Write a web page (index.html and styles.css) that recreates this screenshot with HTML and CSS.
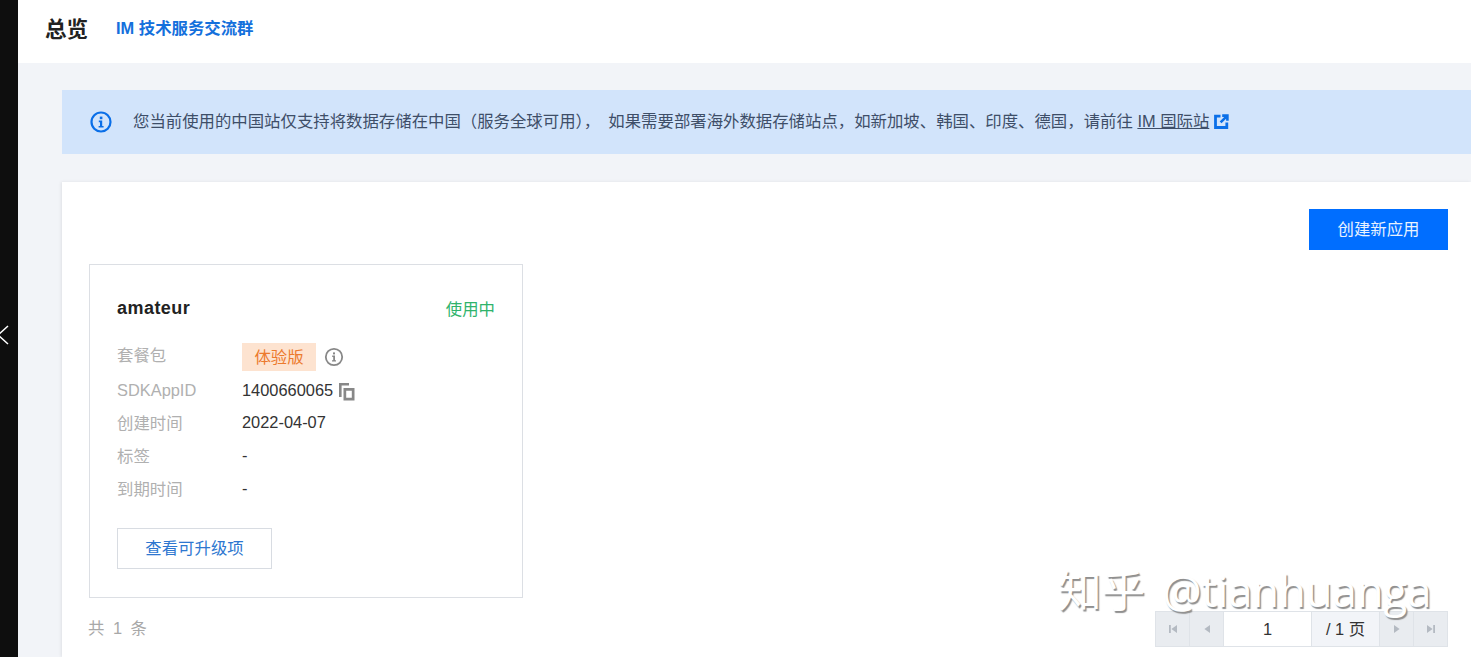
FILE: index.html
```html
<!DOCTYPE html>
<html lang="zh-CN">
<head>
  <meta charset="UTF-8" />
  <title>总览</title>
  <link rel="stylesheet" href="styles.css">
</head>
<body>
  <div class="side">
    <svg class="side-arrow" width="10" height="24" viewBox="0 0 10 24"><path d="M8 3 L-2 12 L8 21" fill="none" stroke="#fff" stroke-width="1.5"/></svg>
  </div>
  <div class="main">
    <div class="header">
      <h2 class="title">总览</h2>
      <a class="group-link">IM 技术服务交流群</a>
    </div>
    <div class="content">
      <div class="notice">
        <svg class="notice-icon" width="24" height="24" viewBox="0 0 24 24">
          <circle cx="12" cy="12" r="9.5" fill="none" stroke="#0a6fe8" stroke-width="2.2"/>
          <rect x="10.8" y="6.6" width="2.6" height="2.6" fill="#0a6fe8"/>
          <path d="M9.8 10.6h3.4v5.4h1.4v1.6H9.6V16h1.4v-3.8H9.8z" fill="#0a6fe8"/>
        </svg>
        <span class="notice-text">您当前使用的中国站仅支持将数据存储在中国（服务全球可用），&ensp;如果需要部署海外数据存储站点，如新加坡、韩国、印度、德国，请前往 <a class="notice-link">IM 国际站</a></span>
        <svg class="ext-icon" width="15" height="15" viewBox="0 0 15 15">
          <path d="M6.5 2.2H1.5v11.3h11.3V8.5" fill="none" stroke="#0a6fe8" stroke-width="2.8"/>
          <path d="M6.6 8.4L12.4 2.6M8.2 1.6h5.2v5.2" fill="none" stroke="#0a6fe8" stroke-width="2.6"/>
        </svg>
      </div>
      <div class="panel">
        <div class="toolbar">
          <button class="btn-primary">创建新应用</button>
        </div>
        <div class="app-card">
          <div class="app-head">
            <span class="app-name">amateur</span>
            <span class="app-status">使用中</span>
          </div>
          <div class="app-row row-plan">
            <span class="row-label label-plan">套餐包</span>
            <span class="plan-tag">体验版</span>
            <svg class="plan-info" width="20" height="20" viewBox="0 0 20 20">
              <circle cx="10" cy="10" r="8.2" fill="none" stroke="#888" stroke-width="1.8"/>
              <rect x="9" y="5.4" width="2" height="2" fill="#888"/>
              <path d="M8.2 8.6h2.8v4.6h1v1.3H8v-1.3h1.2V9.9h-1z" fill="#888"/>
            </svg>
          </div>
          <div class="app-row row-id">
            <span class="row-label">SDKAppID</span>
            <span class="row-value">1400660065</span>
            <svg class="copy-icon" width="16" height="18" viewBox="0 0 16 18">
              <path d="M0 0h10v2.6H2.6V14H0z" fill="#888"/>
              <path d="M4.5 5h11v12.5h-11z M7.2 7.8v7h5.6v-7z" fill="#888" fill-rule="evenodd"/>
            </svg>
          </div>
          <div class="app-row">
            <span class="row-label label-cjk">创建时间</span>
            <span class="row-value">2022-04-07</span>
          </div>
          <div class="app-row">
            <span class="row-label label-cjk">标签</span>
            <span class="row-value">-</span>
          </div>
          <div class="app-row">
            <span class="row-label label-cjk">到期时间</span>
            <span class="row-value">-</span>
          </div>
          <button class="btn-outline">查看可升级项</button>
        </div>
        <div class="footer">
          <span class="total">共 1 条</span>
          <div class="pager">
            <span class="pager-btn"><svg width="10" height="10" viewBox="0 0 10 10"><path d="M1 1h1.8v8H1zM9 1v8L3.4 5z" fill="#b4bac2"/></svg></span>
            <span class="pager-btn"><svg width="10" height="10" viewBox="0 0 10 10"><path d="M8 1v8L2.4 5z" fill="#b4bac2"/></svg></span>
            <span class="pager-input">1</span>
            <span class="pager-count">/ 1 页</span>
            <span class="pager-btn"><svg width="10" height="10" viewBox="0 0 10 10"><path d="M2 1v8L7.6 5z" fill="#b4bac2"/></svg></span>
            <span class="pager-btn"><svg width="10" height="10" viewBox="0 0 10 10"><path d="M9 1H7.2v8H9zM1 1v8L6.6 5z" fill="#b4bac2"/></svg></span>
          </div>
        </div>
      </div>
    </div>
  </div>
  <div class="watermark">知乎 @tianhuanga</div>
</body>
</html>
```

FILE: styles.css
```css
html, body {
  height: 100%;
}
body {
  margin: 0;
  display: flex;
  height: 657px;
  overflow: hidden;
  position: relative;
  background: #f2f4f8;
  color: #333;
  font-family: "Liberation Sans", "Noto Sans CJK SC", sans-serif;
  font-size: 16.4px;
}
.side {
  width: 18px;
  flex: none;
  background: #0e0e0e;
  display: flex;
  align-items: center;
}
.side-arrow {
  margin-top: 12px;
}
.main {
  flex: 1;
  min-width: 0;
  display: flex;
  flex-direction: column;
}
.header {
  height: 63px;
  flex: none;
  background: #fff;
  display: flex;
  align-items: center;
  padding: 0 0 9px 27px;
  box-sizing: border-box;
}
.title {
  margin: 0 28px 0 0;
  font-size: 21.5px;
  font-weight: 700;
  color: #222;
}
.group-link {
  font-weight: 700;
  color: #1470dc;
}
.content {
  flex: 1;
  padding: 27px 0 0 44px;
  display: flex;
  flex-direction: column;
  gap: 28px;
}
.notice {
  height: 64px;
  flex: none;
  background: #d2e4fb;
  display: flex;
  align-items: center;
  padding-left: 27px;
  color: #3e4e68;
}
.notice-icon {
  margin-right: 20px;
}
.notice-text {
  padding-bottom: 4px;
}
.notice-link {
  color: #3e4e68;
  text-decoration: underline;
}
.ext-icon {
  margin-left: 5px;
  margin-bottom: 2px;
}
.panel {
  flex: 1;
  background: #fff;
  padding: 27px 23px 0 27px;
  box-shadow: -1px 0 3px rgba(0, 0, 0, 0.08);
}
.toolbar {
  display: flex;
  justify-content: flex-end;
  margin-bottom: 14px;
}
.btn-primary {
  width: 139px;
  height: 41px;
  border: 0;
  padding: 0 0 4px;
  background: #006eff;
  color: #e8f2ff;
  font: inherit;
}
.app-card {
  width: 434px;
  height: 334px;
  box-sizing: border-box;
  border: 1px solid #dcdfe4;
  padding: 31px 27px 0;
}
.app-head {
  display: flex;
  justify-content: space-between;
  align-items: center;
  margin-bottom: 20px;
}
.app-name {
  font-size: 18px;
  font-weight: 700;
  letter-spacing: 0.45px;
  color: #222;
}
.app-status {
  color: #2fb36b;
}
.app-row {
  display: flex;
  align-items: center;
  height: 33px;
}
.row-plan {
  height: 31px;
  margin-bottom: 2px;
}
.row-id {
  padding-top: 2px;
  height: 31px;
}
.row-label {
  width: 125px;
  flex: none;
  color: #b0b0b0;
}
.label-plan {
  padding-bottom: 4px;
}
.label-cjk {
  padding-bottom: 2px;
}
.row-value {
  color: #333;
}
.plan-tag {
  width: 74px;
  height: 28px;
  margin-top: 2px;
  padding-bottom: 2px;
  box-sizing: border-box;
  background: #fde3d0;
  color: #ec7a2e;
  display: flex;
  align-items: center;
  justify-content: center;
}
.plan-info {
  margin: 2px 0 0 8px;
}
.copy-icon {
  margin-left: 6px;
  margin-top: 3px;
}
.btn-outline {
  display: block;
  width: 155px;
  height: 41px;
  margin-top: 23px;
  padding: 0 0 4px;
  background: #fff;
  border: 1px solid #d8dce2;
  color: #2e77d0;
  font: inherit;
}
.footer {
  display: flex;
  justify-content: space-between;
  align-items: center;
  margin-top: 13px;
  margin-left: -1px;
}
.total {
  color: #a8a8a8;
  word-spacing: 4px;
  padding-bottom: 4px;
}
.pager {
  display: flex;
  height: 36px;
  background: #e9ecf0;
  border: 1px solid #dfe3e8;
  box-sizing: border-box;
}
.pager-btn {
  width: 33px;
  display: flex;
  align-items: center;
  justify-content: center;
  border-right: 1px solid #dfe3e8;
}
.pager-btn:last-child {
  border-right: 0;
}
.pager-input {
  width: 87px;
  background: #fff;
  text-align: center;
  line-height: 34px;
  border-right: 1px solid #dfe3e8;
}
.pager-count {
  width: 67px;
  background: #f2f4f8;
  text-align: center;
  line-height: 34px;
  border-right: 1px solid #dfe3e8;
}
.watermark {
  position: absolute;
  left: 1058px;
  top: 562px;
  font-size: 43.6px;
  line-height: 56px;
  word-spacing: 6px;
  white-space: nowrap;
  color: #fff;
  text-shadow: 1.5px 1.5px 1px #8f8f8f;
  font-family: "Open Sans", "Noto Sans CJK SC", sans-serif;
}
```
